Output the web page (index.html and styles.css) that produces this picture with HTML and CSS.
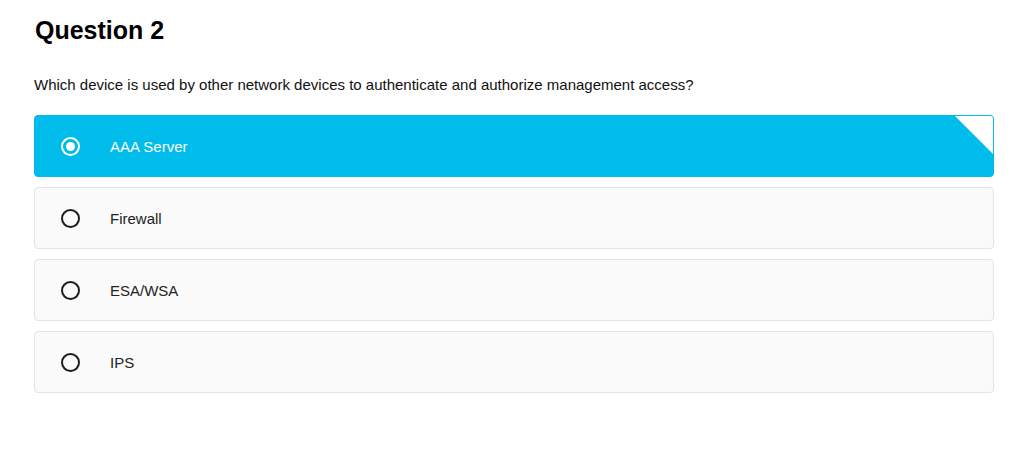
FILE: index.html
```html
<!DOCTYPE html>
<html>
<head>
<meta charset="utf-8">
<link rel="stylesheet" href="styles.css">
</head>
<body>
<main class="quiz">
  <h2 class="title">Question 2</h2>
  <p class="question">Which device is used by other network devices to authenticate and authorize management access?</p>
  <div class="options">
    <div class="option selected"><span class="radio"></span><span class="label">AAA Server</span></div>
    <div class="option"><span class="radio"></span><span class="label">Firewall</span></div>
    <div class="option"><span class="radio"></span><span class="label">ESA/WSA</span></div>
    <div class="option"><span class="radio"></span><span class="label">IPS</span></div>
  </div>
</main>
</body>
</html>
```
FILE: styles.css
```css
* { box-sizing: border-box; }
body {
  margin: 0;
  background: #fff;
  font-family: "Liberation Sans", Arial, sans-serif;
  color: #222;
}
.quiz {
  width: 960px;
  margin-left: 34px;
  padding-top: 16px;
}
.title {
  margin: 0 0 0 1px;
  font-size: 25px;
  line-height: 28px;
  font-weight: bold;
  color: #000;
}
.question {
  margin: 31px 0 0 0;
  font-size: 15px;
  line-height: 20px;
  color: #111;
}
.options {
  margin-top: 20px;
  display: flex;
  flex-direction: column;
  gap: 10px;
}
.option {
  position: relative;
  height: 62px;
  border: 1px solid #e1e4e8;
  border-radius: 4px;
  background: #fafafa;
  display: flex;
  align-items: center;
  padding-left: 26px;
  font-size: 15px;
  overflow: hidden;
}
.radio {
  width: 19px;
  height: 19px;
  border: 2px solid #1c1c1c;
  border-radius: 50%;
  flex: none;
  display: flex;
  align-items: center;
  justify-content: center;
}
.label {
  margin-left: 30px;
  color: #222;
}
.option.selected {
  background: #00bceb;
  border-color: #00bceb;
}
.option.selected .radio {
  border-color: #fff;
}
.option.selected .radio::after {
  content: "";
  width: 9px;
  height: 9px;
  border-radius: 50%;
  background: #fff;
}
.option.selected .label {
  color: #fff;
}
.option.selected::after {
  content: "";
  position: absolute;
  top: 0;
  right: 0;
  width: 38px;
  height: 38px;
  background: linear-gradient(to bottom left, #fff 49.5%, transparent 50.5%);
}
```
